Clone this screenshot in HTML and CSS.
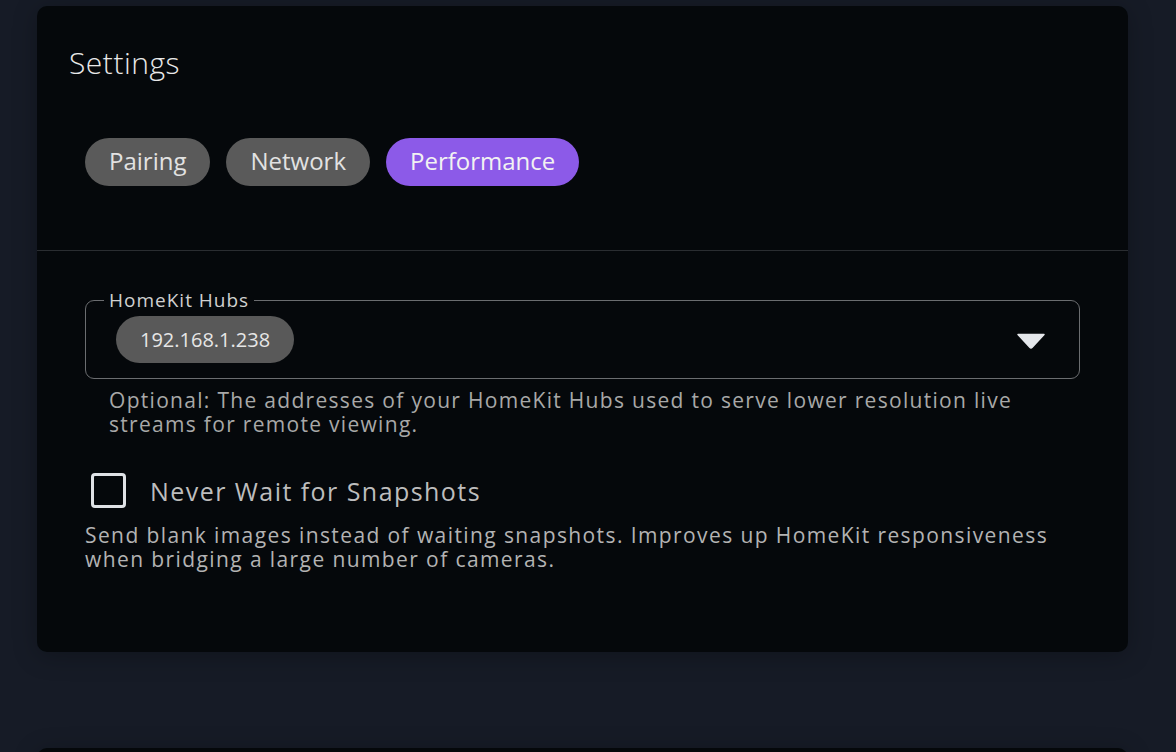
FILE: index.html
```html
<!DOCTYPE html>
<html lang="en">
<head>
<meta charset="utf-8">
<title>Settings</title>
<link rel="stylesheet" href="styles.css">
</head>
<body>
<main class="page">
  <section class="card">
    <header class="card-header">
      <h2 class="title">Settings</h2>
      <nav class="tabs">
        <button class="tab">Pairing</button>
        <button class="tab">Network</button>
        <button class="tab tab-active">Performance</button>
      </nav>
    </header>
    <div class="divider"></div>
    <div class="card-body">
      <fieldset class="select-field">
        <legend class="select-label">HomeKit Hubs</legend>
        <div class="select-row">
          <span class="value-chip">192.168.1.238</span>
          <svg class="arrow" width="30" height="18" viewBox="0 0 30 18" aria-hidden="true">
            <path d="M2 2.5 L28 2.5 L16.2 15.3 Q15 16.6 13.8 15.3 Z" fill="#e5e7eb" stroke="#e5e7eb" stroke-width="1.5" stroke-linejoin="round"/>
          </svg>
        </div>
      </fieldset>
      <p class="helper">Optional: The addresses of your HomeKit Hubs used to serve lower resolution live streams for remote viewing.</p>
      <label class="check-row">
        <span class="checkbox"></span>
        <span class="check-label">Never Wait for Snapshots</span>
      </label>
      <p class="description">Send blank images instead of waiting snapshots. Improves up HomeKit responsiveness when bridging a large number of cameras.</p>
    </div>
  </section>
  <section class="card card-next"></section>
</main>
</body>
</html>
```

FILE: styles.css
```css
* { box-sizing: border-box; }

html, body {
  margin: 0;
  padding: 0;
  background: #161b26;
  height: 100%;
  overflow: hidden;
}

body {
  font-family: "Open Sans", "Noto Sans", sans-serif;
  color: #e6e6e6;
}

.page {
  padding: 6px 48px 0 37px;
  display: flex;
  flex-direction: column;
  gap: 96px;
}

.card {
  background: #05080b;
  border-radius: 10px;
  box-shadow: 0 4px 24px rgba(0, 0, 0, 0.25);
  height: 646px;
}

.card-next {
  height: 300px;
}

.card-header {
  padding: 39px 32px 64px 32px;
}

.title {
  margin: 0;
  font-size: 30px;
  line-height: 36px;
  font-weight: 300;
  letter-spacing: 0.5px;
  color: #e9e9e9;
}

.tabs {
  margin-top: 57px;
  padding-left: 16px;
  display: flex;
  gap: 16px;
}

.tab {
  font-family: inherit;
  border: none;
  height: 48px;
  padding: 0 24px 3px 24px;
  border-radius: 24px;
  background: #5a5a5a;
  color: #e2e2e2;
  font-size: 24px;
  font-weight: 400;
}

.tab-active {
  background: #8c5ae8;
  color: #f2f2f2;
}

.divider {
  height: 1px;
  background: #2a2d31;
}

.card-body {
  padding: 38px 48px 0 48px;
}

.select-field {
  margin: 0;
  border: 1.5px solid #6b6d70;
  border-radius: 9px;
  padding: 5px 33px 15px 30px;
}

.select-label {
  font-size: 19px;
  line-height: 22px;
  letter-spacing: 1px;
  padding: 0 5px;
  margin-left: -12px;
  color: #d0d0d0;
}

.select-row {
  display: flex;
  align-items: center;
  justify-content: space-between;
}

.value-chip {
  height: 47px;
  display: inline-flex;
  align-items: center;
  padding: 0 24px;
  border-radius: 24px;
  background: #595959;
  color: #e6e6e6;
  font-size: 20px;
}

.arrow {
  display: block;
  margin-top: 2px;
}

.helper {
  margin: 9px 0 0 24px;
  font-size: 21px;
  line-height: 24px;
  letter-spacing: 1.3px;
  color: #a8a8a8;
}

.check-row {
  margin-top: 36px;
  display: flex;
  align-items: center;
  gap: 24px;
  padding-left: 6px;
}

.checkbox {
  width: 35px;
  height: 35px;
  border: 3px solid #dfe2e6;
  border-radius: 4px;
  flex: none;
}

.check-label {
  font-size: 25px;
  letter-spacing: 1.45px;
  color: #bdbdbd;
  margin-top: 2px;
}

.description {
  margin: 15px 0 0 0;
  font-size: 21px;
  line-height: 24px;
  letter-spacing: 1.4px;
  color: #b3b3b3;
}
```
